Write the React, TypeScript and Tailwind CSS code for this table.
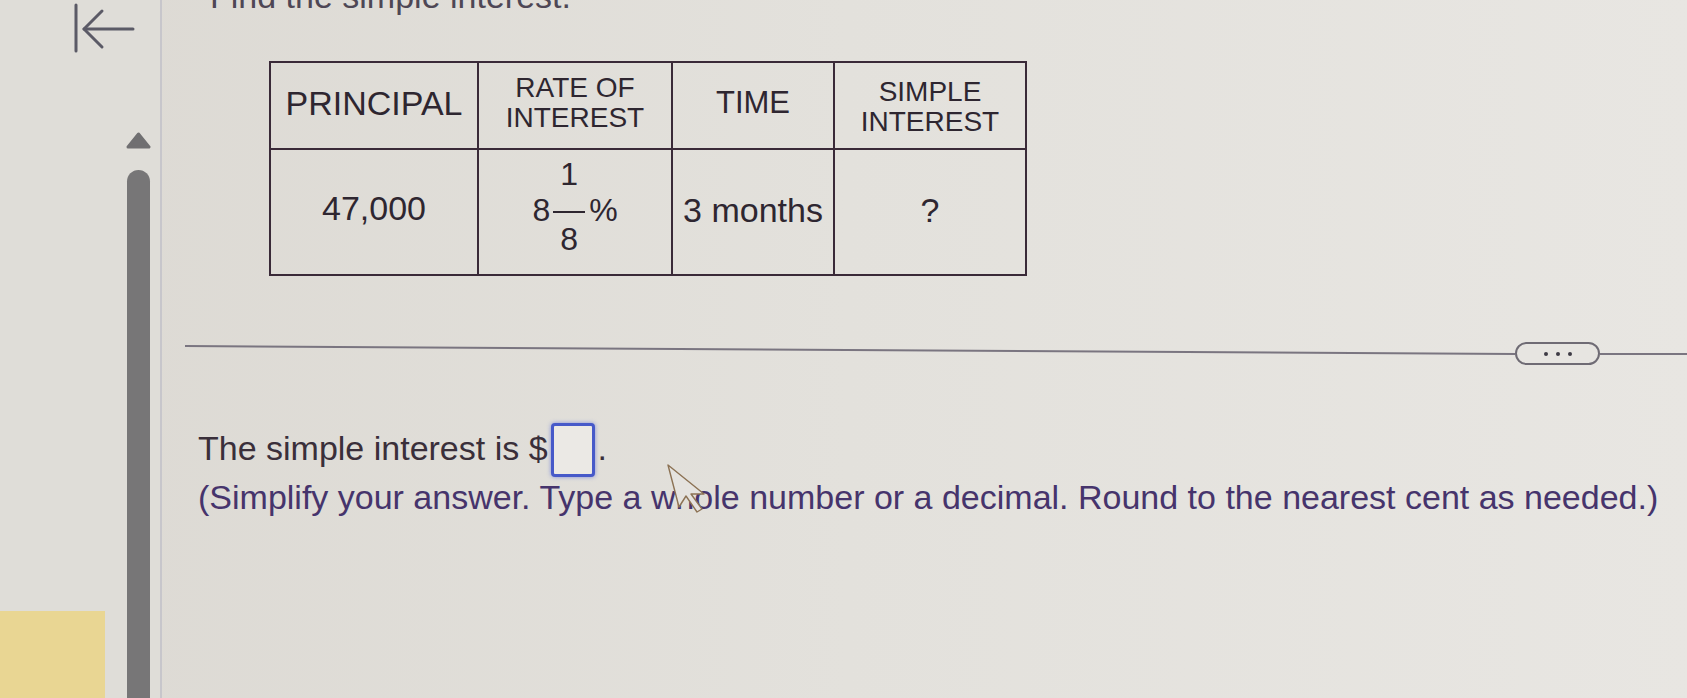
import React from 'react';

function BackIcon() {
  return (
    <svg width="62" height="50" viewBox="0 0 62 50" className="ml-[73px] mt-[3px]" fill="none">
      <line x1="3" y1="2" x2="3" y2="48" stroke="#5b5a66" strokeWidth="3" strokeLinecap="round" />
      <line x1="11" y1="26" x2="60" y2="26" stroke="#5b5a66" strokeWidth="3" strokeLinecap="round" />
      <polyline points="29,8 11,26 29,44" stroke="#5b5a66" strokeWidth="3" strokeLinecap="round" strokeLinejoin="round" />
    </svg>
  );
}

function Cursor() {
  return (
    <svg width="42" height="52" viewBox="0 0 42 52" className="absolute left-[469px] top-[-13px]">
      <polygon
        points="1,1 12,43 19,32 30,48 35,45 24,30 37,30"
        fill="#e5e3df"
        stroke="#8c7254"
        strokeWidth="1.4"
        strokeLinejoin="round"
      />
    </svg>
  );
}

export default function App() {
  return (
    <div className="w-[1687px] h-[698px] overflow-hidden flex bg-linear-to-r from-[#dcd9d3] via-[#e3e1dc] to-[#e8e6e2] font-['Liberation_Sans',Arial,sans-serif]">
      {/* Left rail */}
      <div className="w-[162px] shrink-0 flex border-r-2 border-[#c7c6cb] bg-[#dfddd8]">
        <div className="w-[127px] flex flex-col justify-between">
          <BackIcon />
          <div className="w-[105px] h-[87px] bg-[#e9d693]" />
        </div>
        <div className="w-[23px] flex flex-col items-center">
          <svg width="25" height="17" viewBox="0 0 25 17" className="mt-[132px]">
            <polygon points="12.5,2 23,15 2,15" fill="#706f71" stroke="#706f71" strokeWidth="3" strokeLinejoin="round" />
          </svg>
          <div className="mt-[21px] flex-1 w-[23px] rounded-t-[12px] bg-[#777677]" />
        </div>
      </div>

      {/* Main */}
      <div className="flex-1 flex flex-col text-[#2e2630]">
        <p className="ml-[48px] mt-[-21px] text-[34px] leading-[34px] text-[#4e4755]">Find the simple interest.</p>

        <table className="ml-[107px] mt-[48px] w-[756px] table-fixed border-collapse text-center">
          <colgroup>
            <col className="w-[208px]" />
            <col className="w-[194px]" />
            <col className="w-[162px]" />
            <col className="w-[192px]" />
          </colgroup>
          <tbody>
            <tr className="h-[87px]">
              <td className="border-2 border-[#3a2a38] text-[34px] leading-[38px] pb-[6px]">PRINCIPAL</td>
              <td className="border-2 border-[#3a2a38] text-[28px] leading-[30px] pb-[6px]">
                RATE OF
                <br />
                INTEREST
              </td>
              <td className="border-2 border-[#3a2a38] text-[31px] leading-[36px] pb-[6px]">TIME</td>
              <td className="border-2 border-[#3a2a38] text-[28px] leading-[30px] pt-[2px]">
                SIMPLE
                <br />
                INTEREST
              </td>
            </tr>
            <tr className="h-[126px]">
              <td className="border-2 border-[#3a2a38] text-[34px] leading-[40px] pb-[8px]">47,000</td>
              <td className="border-2 border-[#3a2a38] pb-[11px]">
                <div className="flex items-center justify-center text-[32px] leading-[32px]">
                  <span className="mt-[7px]">8</span>
                  <div className="flex flex-col items-center ml-[3px]">
                    <span>1</span>
                    <div className="w-[32px] h-[2px] bg-[#2e2630] mt-[21px] mb-[10px]" />
                    <span>8</span>
                  </div>
                  <span className="ml-[4px] mt-[7px]">%</span>
                </div>
              </td>
              <td className="border-2 border-[#3a2a38] text-[34px] leading-[40px] pb-[4px]">3 months</td>
              <td className="border-2 border-[#3a2a38] text-[34px] leading-[40px] pb-[4px]">?</td>
            </tr>
          </tbody>
        </table>

        {/* Divider with more button */}
        <div className="ml-[23px] mt-[66px] h-[23px] flex items-center">
          <div className="flex-1 h-[2px] bg-[#7a7580] origin-right rotate-[0.34deg]" />
          <div className="w-[85px] h-[23px] rounded-full border-[2.5px] border-[#6f6b74] bg-[#e7e5e1] flex items-center justify-center gap-[8px]">
            <span className="w-[4px] h-[4px] rounded-full bg-[#3e3b45]" />
            <span className="w-[4px] h-[4px] rounded-full bg-[#3e3b45]" />
            <span className="w-[4px] h-[4px] rounded-full bg-[#3e3b45]" />
          </div>
          <div className="w-[87px] h-[2px] bg-[#7a7580]" />
        </div>

        {/* Answer */}
        <div className="ml-[36px] mt-[58px] flex items-center text-[34px] leading-[40px] text-[#3a2f3a]">
          <span className="mt-[-4px]">The simple interest is $</span>
          <div className="ml-[3px] w-[44px] h-[54px] rounded-[4px] border-[3px] border-[#4659c9] bg-[#ebe9e5] shadow-[0_0_4px_rgba(90,110,220,0.7)]" />
          <span className="ml-[3px] mt-[-4px]">.</span>
        </div>
        <div className="relative ml-[36px] text-[34px] leading-[40px] text-[#46346c] whitespace-nowrap">
          (Simplify your answer. Type a whole number or a decimal. Round to the nearest cent as needed.)
          <Cursor />
        </div>
      </div>
    </div>
  );
}
